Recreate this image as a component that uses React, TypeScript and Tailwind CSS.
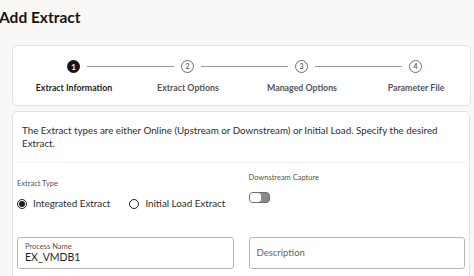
import React from "react";

const font = { fontFamily: "Lato, 'Noto Sans', sans-serif" };

function Step({ n, active }: { n: number; active?: boolean }) {
  return active ? (
    <div className="w-[13px] h-[13px] rounded-full bg-[#161513] text-white flex items-center justify-center text-[8px] font-bold leading-none shrink-0">
      {n}
    </div>
  ) : (
    <div className="w-[13px] h-[13px] rounded-full border border-[#6f6f6f] bg-white text-[#555] flex items-center justify-center text-[7px] font-semibold leading-none shrink-0">
      {n}
    </div>
  );
}

function Line() {
  return <div className="w-[87px] mx-[7px] h-px bg-[#9b9b9b] shrink-0" />;
}

function Radio({ checked, label }: { checked?: boolean; label: string }) {
  return (
    <div className="flex items-center gap-[6px]">
      <div className="w-[10px] h-[10px] rounded-full border border-[#1f1f1f] flex items-center justify-center shrink-0">
        {checked && <div className="w-[6px] h-[6px] rounded-full bg-[#1f1f1f]" />}
      </div>
      <span className="text-[9.8px] text-[#2e2e2e] leading-none whitespace-nowrap">{label}</span>
    </div>
  );
}

export default function App() {
  return (
    <div className="w-[474px] h-[276px] bg-[#f9f8f6] overflow-hidden relative" style={font}>
      <div className="pt-[5px] pl-0 h-[45px]">
        <h1 className="text-[15.5px] font-bold text-[#161513] leading-[24px] -ml-[1px]">Add Extract</h1>
      </div>

      <div className="ml-[12px] w-[459px] h-[61px] bg-white border border-[#e4e2df] rounded-[5px] flex flex-col">
        <div className="flex items-center pl-[54px] pt-[14px]">
          <Step n={1} active />
          <Line />
          <Step n={2} />
          <Line />
          <Step n={3} />
          <Line />
          <Step n={4} />
        </div>
        <div className="grid grid-cols-[114px_114px_114px_114px] pl-[4px] mt-[9px]">
          <div className="text-center text-[8.8px] font-bold text-[#1f1f1f] leading-[12px]">Extract Information</div>
          <div className="text-center text-[8.8px] font-bold text-[#555] leading-[12px]">Extract Options</div>
          <div className="text-center text-[8.8px] font-bold text-[#555] leading-[12px]">Managed Options</div>
          <div className="text-center text-[8.8px] font-bold text-[#555] leading-[12px]">Parameter File</div>
        </div>
      </div>

      <div className="ml-[12px] mt-[5px] w-[458px] h-[200px] bg-white border border-[#e4e2df] rounded-[5px] px-[4px]">
        <p className="pl-[5px] pr-[10px] pt-[12px] text-[9.8px] leading-[13px] text-[#2e2e2e]">
          The Extract types are either Online (Upstream or Downstream) or Initial Load. Specify the desired Extract.
        </p>
        <div className="mt-[12px] h-px bg-[#efeeec] -ml-[1px]" />
        <div className="flex gap-[15px] mt-[10px]">
          <div className="w-[217px]">
            <div className="h-[40px] flex flex-col">
              <div className="text-[7.5px] text-[#555] leading-[10px] mt-[6px]">Extract Type</div>
              <div className="flex gap-[19px] mt-[10px]">
                <Radio checked label="Integrated Extract" />
                <Radio label="Initial Load Extract" />
              </div>
            </div>
            <div className="mt-[24px] h-[32px] border border-[#b9b7b4] rounded-[3px] pl-[7px] flex flex-col justify-center">
              <div className="text-[7.5px] text-[#555] leading-[9px]">Process Name</div>
              <div className="text-[10.5px] text-[#1f1f1f] leading-[13px]">EX_VMDB1</div>
            </div>
          </div>
          <div className="w-[217px]">
            <div className="h-[40px]">
              <div className="text-[7.5px] text-[#555] leading-[10px]">Downstream Capture</div>
              <div className="mt-[9px] w-[21px] h-[11px] rounded-[4px] border border-[#6f6f6f] bg-[#8a8987] relative">
                <div className="absolute left-0 top-0 w-[11px] h-[9px] rounded-[3px] bg-white" />
              </div>
            </div>
            <div className="mt-[24px] h-[32px] border border-[#b9b7b4] rounded-[3px] pl-[7px] flex items-center">
              <span className="text-[9.5px] text-[#666] leading-none">Description</span>
            </div>
          </div>
        </div>
      </div>
    </div>
  );
}
